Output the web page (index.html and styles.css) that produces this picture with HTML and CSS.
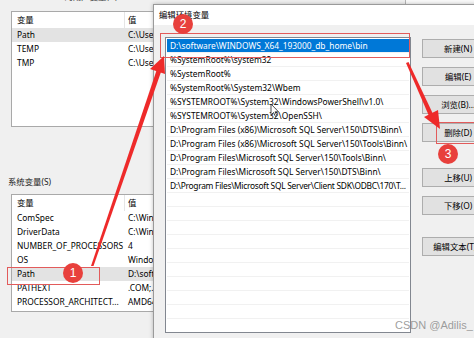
FILE: index.html
```html
<!DOCTYPE html>
<html lang="zh-CN">
<head>
    <meta charset="UTF-8">
    <title>编辑环境变量</title>
    <link rel="stylesheet" href="styles.css">
</head>
<body>
    <div class="desktop">
        <div class="env-window">
            <div class="top-strip">
                <div class="strip-text">Administrator 的用户变量(U)</div>
                <div class="strip-side"></div>
            </div>
            <div class="var-list user-list">
                <div class="row head"><span class="c-name">变量</span><span class="c-val">值</span></div>
                <div class="row sel"><span class="c-name">Path</span><span class="c-val">C:\Users\Adilis\AppData</span></div>
                <div class="row"><span class="c-name">TEMP</span><span class="c-val">C:\Users\Adilis\AppData</span></div>
                <div class="row"><span class="c-name">TMP</span><span class="c-val">C:\Users\Adilis\AppData</span></div>
            </div>
            <div class="group-label">系统变量(S)</div>
            <div class="var-list sys-list">
                <div class="row head"><span class="c-name">变量</span><span class="c-val">值</span></div>
                <div class="row"><span class="c-name">ComSpec</span><span class="c-val">C:\Windows\system32</span></div>
                <div class="row"><span class="c-name">DriverData</span><span class="c-val">C:\Windows\System32</span></div>
                <div class="row"><span class="c-name">NUMBER_OF_PROCESSORS</span><span class="c-val">4</span></div>
                <div class="row"><span class="c-name">OS</span><span class="c-val">Windows_NT</span></div>
                <div class="row sel"><span class="c-name">Path</span><span class="c-val">D:\software\WINDOWS</span></div>
                <div class="row"><span class="c-name">PATHEXT</span><span class="c-val">.COM;.EXE;.BAT</span></div>
                <div class="row"><span class="c-name">PROCESSOR_ARCHITECT...</span><span class="c-val">AMD64</span></div>
            </div>
        </div>

        <div class="dialog">
            <div class="dlg-title">编辑环境变量</div>
            <div class="dlg-body">
                <div class="path-list">
                    <div class="path-row sel">D:\software\WINDOWS_X64_193000_db_home\bin</div>
                    <div class="path-row">%SystemRoot%\system32</div>
                    <div class="path-row">%SystemRoot%</div>
                    <div class="path-row">%SystemRoot%\System32\Wbem</div>
                    <div class="path-row">%SYSTEMROOT%\System32\WindowsPowerShell\v1.0\</div>
                    <div class="path-row">%SYSTEMROOT%\System32\OpenSSH\</div>
                    <div class="path-row">D:\Program Files (x86)\Microsoft SQL Server\150\DTS\Binn\</div>
                    <div class="path-row">D:\Program Files (x86)\Microsoft SQL Server\150\Tools\Binn\</div>
                    <div class="path-row">D:\Program Files\Microsoft SQL Server\150\Tools\Binn\</div>
                    <div class="path-row">D:\Program Files\Microsoft SQL Server\150\DTS\Binn\</div>
                    <div class="path-row cut">D:\Program Files\Microsoft SQL Server\Client SDK\ODBC\170\T...</div>
                    <div class="path-row"></div>
                    <div class="path-row"></div>
                    <div class="path-row"></div>
                    <div class="path-row"></div>
                    <div class="path-row"></div>
                    <div class="path-row"></div>
                    <div class="path-row"></div>
                    <div class="path-row"></div>
                    <div class="path-row"></div>
                    <div class="path-row"></div>
                </div>
                <div class="btns">
                    <div class="btn">新建(N)</div>
                    <div class="btn gap-s">编辑(E)</div>
                    <div class="btn gap-s">浏览(B)...</div>
                    <div class="btn gap-s">删除(D)</div>
                    <div class="btn gap-l">上移(U)</div>
                    <div class="btn gap-s">下移(O)</div>
                    <div class="btn gap-m">编辑文本(T)...</div>
                </div>
            </div>
        </div>

        <svg class="marks" width="474" height="338" viewBox="0 0 474 338">
            <rect x="7.5" y="267.5" width="92" height="17" fill="none" stroke="#e25b5b" stroke-width="1"/>
            <rect x="160.5" y="33.5" width="249" height="24" fill="none" stroke="#e25b5b" stroke-width="1"/>
            <rect x="436.5" y="122.5" width="45" height="21" fill="none" stroke="#e25b5b" stroke-width="1"/>
            <!-- arrow to the path entry -->
            <polygon points="91,266 93.5,266 161,72 156.5,70.5" fill="#ee2a2a"/>
            <polygon points="164,56 165,74 150,69" fill="#ee2a2a"/>
            <!-- arrow to the delete button -->
            <polygon points="406,63 408.5,62 433,114 429,116" fill="#ee2a2a"/>
            <polygon points="440,129 438,110 424,117" fill="#ee2a2a"/>
            <!-- mouse pointer -->
            <path d="M271 104 L271 115 L273.5 112.5 L275.5 116.5 L277 115.8 L275 111.8 L278.5 111.8 Z" fill="#fff" stroke="#222" stroke-width="0.8"/>
        </svg>

        <div class="badge b1">1</div>
        <div class="badge b2">2</div>
        <div class="badge b3">3</div>
        <div class="watermark">CSDN @Adilis_</div>
    </div>
</body>
</html>
```

FILE: styles.css
```css
body {
    margin: 0;
    background-color: #f0f0f0;
    font-family: "Noto Sans", "Noto Sans CJK SC", sans-serif;
    font-size: 8.4px;
    color: #000;
}
.desktop {
    position: relative;
    width: 474px;
    height: 338px;
    overflow: hidden;
}
.top-strip {
    display: flex;
    height: 5px;
    overflow: hidden;
}
.strip-text {
    flex: 1;
    padding-left: 8px;
    margin-top: -9px;
    line-height: 12px;
    color: #444;
}
.strip-side {
    width: 68px;
    background: #fafafa;
    border-left: 1px solid #b5b5b5;
}
.var-list {
    margin-left: 11px;
    width: 160px;
    box-sizing: border-box;
    background: #fff;
    border: 1px solid #a9a9a9;
    overflow: hidden;
}
.user-list {
    margin-top: 6px;
    height: 116px;
}
.group-label {
    margin: 48px 0 0 8px;
    line-height: 14px;
    color: #222;
}
.sys-list {
    margin-top: 5px;
    height: 118px;
}
.row {
    display: flex;
    height: 14px;
    line-height: 14px;
    white-space: nowrap;
}
.row.head {
    height: 16px;
    line-height: 16px;
}
.row.sel {
    background: #e3e3e3;
}
.c-name {
    width: 113px;
    flex-shrink: 0;
    padding-left: 5px;
    box-sizing: border-box;
    overflow: hidden;
}
.head .c-name {
    border-right: 1px solid #e5e5e5;
}
.c-val {
    padding-left: 3px;
}
.dialog {
    position: absolute;
    left: 153px;
    top: 4px;
    width: 340px;
    height: 345px;
    background: #f0f0f0;
    border: 1px solid #9a9a9a;
    box-shadow: 0 0 4px rgba(0, 0, 0, 0.25);
}
.dlg-title {
    height: 20px;
    line-height: 19px;
    padding-left: 5px;
    background: #fff;
}
.dlg-body {
    display: flex;
    align-items: flex-start;
    gap: 11px;
    padding: 12px 0 0 11px;
}
.path-list {
    width: 261px;
    height: 296px;
    box-sizing: border-box;
    padding: 1px;
    background: #fff;
    border: 1px solid #828790;
    overflow: hidden;
}
.path-row {
    height: 14px;
    line-height: 14px;
    padding-left: 3px;
    box-sizing: border-box;
    border-bottom: 1px solid #f1f1f1;
    white-space: nowrap;
    overflow: hidden;
}
.path-row.cut {
    letter-spacing: -0.27px;
}
.path-row.sel {
    background: #0078d7;
    color: #fff;
}
.btns {
    display: flex;
    flex-direction: column;
    width: 76px;
    padding-top: 2px;
}
.btn {
    height: 19px;
    line-height: 17px;
    box-sizing: border-box;
    text-align: center;
    background: #e1e1e1;
    border: 1px solid #adadad;
    white-space: nowrap;
}
.gap-s {
    margin-top: 9px;
}
.gap-m {
    margin-top: 22px;
}
.gap-l {
    margin-top: 26px;
}
.marks {
    position: absolute;
    left: 0;
    top: 0;
    pointer-events: none;
}
.badge {
    position: absolute;
    width: 20px;
    height: 20px;
    border-radius: 50%;
    background: #e8403c;
    color: #fff;
    font-family: "Liberation Sans", sans-serif;
    font-size: 12px;
    line-height: 20px;
    text-align: center;
}
.b1 {
    left: 63px;
    top: 263px;
}
.b2 {
    left: 173px;
    top: 14px;
}
.b3 {
    left: 438px;
    top: 144px;
}
.watermark {
    position: absolute;
    left: 395px;
    top: 319px;
    font-family: "Liberation Sans", sans-serif;
    font-size: 11px;
    color: rgba(140, 140, 140, 0.85);
}
```
